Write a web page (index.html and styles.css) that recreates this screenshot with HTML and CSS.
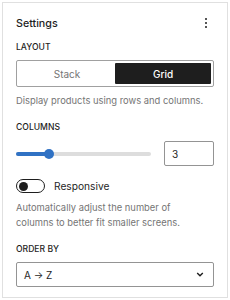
FILE: index.html
```html
<!DOCTYPE html>
<html lang="en">
<head>
    <meta charset="UTF-8">
    <meta name="viewport" content="width=device-width, initial-scale=1.0">
    <title>Settings</title>
    <link rel="stylesheet" href="styles.css">
</head>
<body>
    <div class="panel">
        <div class="panel-header">
            <span class="panel-title">Settings</span>
            <span class="kebab"><i></i><i></i><i></i></span>
        </div>

        <div class="label">Layout</div>
        <div class="segmented">
            <span class="segment">Stack</span>
            <span class="segment active">Grid</span>
        </div>
        <p class="help">Display products using rows and columns.</p>

        <div class="label">Columns</div>
        <div class="range-row">
            <div class="range">
                <div class="range-fill"></div>
                <div class="range-thumb"></div>
            </div>
            <div class="number">3</div>
        </div>

        <div class="toggle-row">
            <span class="toggle"><span class="knob"></span></span>
            <span class="toggle-label">Responsive</span>
        </div>
        <p class="help help-toggle">Automatically adjust the number of<br>columns to better fit smaller screens.</p>

        <div class="label">Order by</div>
        <div class="select">
            <span>A → Z</span>
            <svg class="chevron" width="8" height="5" viewBox="0 0 8 5">
                <path d="M1.2 1 L4 3.8 L6.8 1" fill="none" stroke="#1e1e1e" stroke-width="1.4"/>
            </svg>
        </div>
    </div>
</body>
</html>
```

FILE: styles.css
```css
body {
    margin: 0;
    padding: 2px 2px 0 2px;
    font-family: Inter, "Noto Sans", "Liberation Sans", sans-serif;
    color: #1e1e1e;
    background: #fff;
}
.panel {
    border: 1px solid #e0e0e0;
    padding: 10px 13px 12px 13px;
    height: 296px;
    box-sizing: border-box;
}
.panel-header {
    display: flex;
    align-items: center;
    justify-content: space-between;
    height: 20px;
    margin-bottom: 7px;
}
.panel-title {
    font-size: 10.7px;
    font-weight: 500;
}
.kebab {
    display: flex;
    flex-direction: column;
    gap: 2px;
    margin-right: 7px;
}
.kebab i {
    width: 2px;
    height: 2px;
    background: #1e1e1e;
    border-radius: 1px;
}
.label {
    font-size: 8.6px;
    font-weight: 500;
    text-transform: uppercase;
    line-height: 14px;
    margin-bottom: 6px;
}
.segmented {
    display: flex;
    height: 27px;
    border: 1px solid #a0a0a0;
    border-radius: 2px;
    padding: 2px;
    box-sizing: border-box;
}
.segment {
    flex: 1;
    display: flex;
    align-items: center;
    justify-content: center;
    font-size: 10px;
    color: #757575;
    border-radius: 1px;
}
.segment.active {
    background: #1e1e1e;
    color: #fff;
    font-weight: 500;
}
.help {
    margin: 6px 0 12px 0;
    font-size: 9.4px;
    line-height: 15px;
    color: #757575;
}
.range-row {
    display: flex;
    align-items: center;
    gap: 13px;
    margin-top: 7px;
}
.range {
    position: relative;
    flex: 1;
    height: 4px;
    background: #ddd;
    border-radius: 2px;
}
.range-fill {
    width: 33px;
    height: 4px;
    background: #3072c4;
    border-radius: 2px;
}
.range-thumb {
    position: absolute;
    left: 28px;
    top: -3px;
    width: 10px;
    height: 10px;
    border-radius: 50%;
    background: #3072c4;
}
.number {
    width: 50px;
    height: 25px;
    border: 1px solid #949494;
    border-radius: 2px;
    box-sizing: border-box;
    font-size: 10px;
    padding-left: 7px;
    display: flex;
    align-items: center;
}
.toggle-row {
    display: flex;
    align-items: center;
    gap: 9px;
    margin-top: 13px;
}
.toggle {
    display: flex;
    align-items: center;
    width: 29px;
    height: 14px;
    border: 1px solid #1e1e1e;
    border-radius: 8px;
    box-sizing: border-box;
    padding: 0 2px;
}
.knob {
    width: 9px;
    height: 9px;
    border-radius: 50%;
    background: #1e1e1e;
}
.toggle-label {
    font-size: 10.2px;
}
.help-toggle {
    margin-top: 7px;
    margin-bottom: 12px;
}
.select {
    display: flex;
    align-items: center;
    justify-content: space-between;
    height: 25px;
    border: 1px solid #949494;
    border-radius: 2px;
    box-sizing: border-box;
    padding: 0 9px 0 7px;
    font-size: 10px;
}
.chevron {
    display: block;
}
```
